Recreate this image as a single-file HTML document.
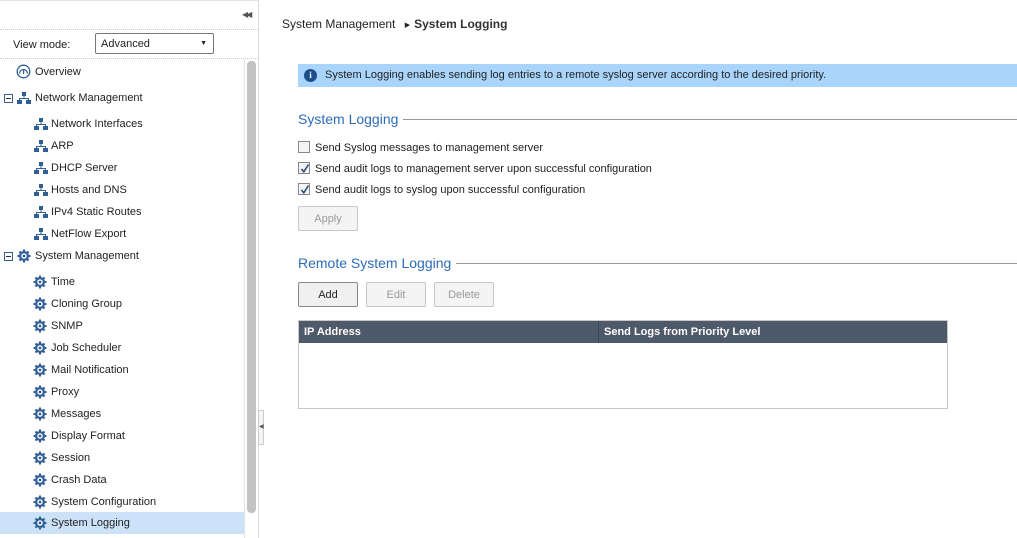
<!DOCTYPE html>
<html><head><style>
*{box-sizing:border-box;margin:0;padding:0}
body{width:1017px;height:538px;overflow:hidden;background:#fff;font-family:"Liberation Sans",Tahoma,sans-serif;font-size:11px;color:#222;position:relative}
.abs{position:absolute}
.side{left:0;top:0;width:259px;height:538px;border-right:1px solid #ddd;border-top:1px solid #e4e4e4;overflow:hidden}
.row{position:absolute;height:22px;line-height:23px;white-space:nowrap}
.row svg{position:absolute;top:4px}
.lbl{position:absolute}
.sel{background:#cce2f9}
.chk{position:absolute;width:12px;height:12px;border:1px solid #888;background:#f4f4f4}
.chk svg{position:absolute;left:0;top:0}
.btn{position:absolute;height:25px;border:1px solid #c8c8c8;background:#f4f4f4;color:#999;text-align:center;line-height:25px;font-size:11px;border-radius:2px}
h2{position:absolute;font-weight:normal;color:#2c6cb8;font-size:14px}
</style></head><body>
<svg width="0" height="0" style="position:absolute"><defs>
<symbol id="g" viewBox="0 0 14 14"><g fill="#2f5f96"><circle cx="7" cy="7" r="5"/><rect x="6" y="0.5" width="2" height="13"/><rect x="0.5" y="6" width="13" height="2"/><rect x="6" y="0.5" width="2" height="13" transform="rotate(45 7 7)"/><rect x="6" y="0.5" width="2" height="13" transform="rotate(-45 7 7)"/></g><circle cx="7" cy="7" r="2.8" fill="#fff"/><circle cx="7" cy="7" r="1.4" fill="#2f5f96"/></symbol>
<symbol id="n" viewBox="0 0 14 14"><g fill="#2f5f96"><rect x="5" y="1" width="4" height="4"/><rect x="6.5" y="5" width="1" height="2"/><rect x="2" y="7" width="10" height="1"/><rect x="2" y="7" width="1" height="2"/><rect x="11" y="7" width="1" height="2"/><rect x="0" y="9" width="5" height="4"/><rect x="9" y="9" width="5" height="4"/></g></symbol>
<symbol id="c" viewBox="0 0 12 12"><path d="M2.5 6l2.3 2.8L9.5 1.5" fill="none" stroke="#2a4d7a" stroke-width="1.6"/></symbol>
</defs></svg>
<div class="abs side">
 <div class="abs" style="left:0;top:28px;width:258px;border-top:1px dotted #ccc"></div>
 <div class="abs" style="left:242px;top:9px;font-size:8px;color:#555;letter-spacing:-2px">◀◀</div>
 <div class="abs" style="left:13px;top:38px;font-size:11px">View mode:</div>
 <div class="abs" style="left:95px;top:32px;width:119px;height:21px;border:1px solid #777;border-radius:2px;padding:4px 5px">Advanced<span style="position:absolute;right:6px;top:6px;font-size:7px">▼</span></div>
 <div class="abs" style="left:0;top:57px;width:258px;border-top:1px dotted #ccc"></div>
 <div class="abs" style="left:247px;top:60px;width:9px;height:452px;background:#c3c3c3;border-radius:4px"></div>
 <div class="abs" style="left:244px;top:58px;height:480px;border-left:1px solid #e2e2e2"></div>

 <div class="row" style="top:60px;left:0;width:244px"><svg style="left:16px;top:3px" width="15" height="15" viewBox="0 0 15 15"><circle cx="7.5" cy="7.5" r="6.3" fill="none" stroke="#2f5f96" stroke-width="1.3"/><path d="M3.5 9.5a4 4 0 1 1 8 0" fill="none" stroke="#2f5f96" stroke-width="1.2"/><rect x="7" y="5" width="1.2" height="5" fill="#2f5f96"/></svg><span class="lbl" style="left:35px">Overview</span></div>
 <div class="row" style="top:86px;left:0"><span style="position:absolute;left:4px;top:7px;width:9px;height:9px;border:1px solid #3a5f8a;background:#fff"><span style="position:absolute;left:1px;top:3px;width:5px;height:1px;background:#333"></span></span><svg style="left:17px" width="14" height="14"><use href="#n"/></svg><span class="lbl" style="left:35px">Network Management</span></div>
 <div class="row" style="top:112px"><svg style="left:34px" width="14" height="14"><use href="#n"/></svg><span class="lbl" style="left:51px">Network Interfaces</span></div>
 <div class="row" style="top:134px"><svg style="left:34px" width="14" height="14"><use href="#n"/></svg><span class="lbl" style="left:51px">ARP</span></div>
 <div class="row" style="top:156px"><svg style="left:34px" width="14" height="14"><use href="#n"/></svg><span class="lbl" style="left:51px">DHCP Server</span></div>
 <div class="row" style="top:178px"><svg style="left:34px" width="14" height="14"><use href="#n"/></svg><span class="lbl" style="left:51px">Hosts and DNS</span></div>
 <div class="row" style="top:200px"><svg style="left:34px" width="14" height="14"><use href="#n"/></svg><span class="lbl" style="left:51px">IPv4 Static Routes</span></div>
 <div class="row" style="top:222px"><svg style="left:34px" width="14" height="14"><use href="#n"/></svg><span class="lbl" style="left:51px">NetFlow Export</span></div>
 <div class="row" style="top:244px;left:0"><span style="position:absolute;left:4px;top:7px;width:9px;height:9px;border:1px solid #3a5f8a;background:#fff"><span style="position:absolute;left:1px;top:3px;width:5px;height:1px;background:#333"></span></span><svg style="left:17px" width="14" height="14"><use href="#g"/></svg><span class="lbl" style="left:35px">System Management</span></div>
 <div class="row" style="top:270px"><svg style="left:33px" width="14" height="14"><use href="#g"/></svg><span class="lbl" style="left:51px">Time</span></div>
 <div class="row" style="top:292px"><svg style="left:33px" width="14" height="14"><use href="#g"/></svg><span class="lbl" style="left:51px">Cloning Group</span></div>
 <div class="row" style="top:314px"><svg style="left:33px" width="14" height="14"><use href="#g"/></svg><span class="lbl" style="left:51px">SNMP</span></div>
 <div class="row" style="top:336px"><svg style="left:33px" width="14" height="14"><use href="#g"/></svg><span class="lbl" style="left:51px">Job Scheduler</span></div>
 <div class="row" style="top:358px"><svg style="left:33px" width="14" height="14"><use href="#g"/></svg><span class="lbl" style="left:51px">Mail Notification</span></div>
 <div class="row" style="top:380px"><svg style="left:33px" width="14" height="14"><use href="#g"/></svg><span class="lbl" style="left:51px">Proxy</span></div>
 <div class="row" style="top:402px"><svg style="left:33px" width="14" height="14"><use href="#g"/></svg><span class="lbl" style="left:51px">Messages</span></div>
 <div class="row" style="top:424px"><svg style="left:33px" width="14" height="14"><use href="#g"/></svg><span class="lbl" style="left:51px">Display Format</span></div>
 <div class="row" style="top:446px"><svg style="left:33px" width="14" height="14"><use href="#g"/></svg><span class="lbl" style="left:51px">Session</span></div>
 <div class="row" style="top:468px"><svg style="left:33px" width="14" height="14"><use href="#g"/></svg><span class="lbl" style="left:51px">Crash Data</span></div>
 <div class="row" style="top:490px"><svg style="left:33px" width="14" height="14"><use href="#g"/></svg><span class="lbl" style="left:51px">System Configuration</span></div>
 <div class="row sel" style="top:511px;left:0;width:244px"><svg style="left:33px" width="14" height="14"><use href="#g"/></svg><span class="lbl" style="left:51px">System Logging</span></div>
 <div class="row" style="top:533px"><svg style="left:33px" width="14" height="14"><use href="#g"/></svg></div>
</div>
<div class="abs" style="left:258px;top:410px;width:6px;height:35px;border:1px solid #ccc;background:#f4f4f4;font-size:6px;line-height:33px;color:#555">◀</div>

<div class="abs" style="left:282px;top:17px;font-size:12px">System Management <span style="font-size:7px;margin:0 4px 0 6px;vertical-align:1px">▶</span><b style="color:#333">System Logging</b></div>
<div class="abs" style="left:298px;top:64px;width:719px;height:23px;background:#a9d4fb;line-height:23px;padding-left:27px">System Logging enables sending log entries to a remote syslog server according to the desired priority.<span style="position:absolute;left:6px;top:5px;width:13px;height:13px;border-radius:50%;background:#1d4f8a;color:#fff;font-weight:bold;font-size:9px;line-height:13px;text-align:center;font-family:'Liberation Serif',serif">i</span></div>

<h2 style="left:298px;top:111px">System Logging</h2>
<div class="abs" style="left:403px;top:119px;width:614px;border-top:1px solid #999"></div>
<div class="chk" style="left:298px;top:141px"></div><div class="abs" style="left:315px;top:142px">Send Syslog messages to management server</div>
<div class="chk" style="left:298px;top:162px"><svg width="12" height="12"><use href="#c"/></svg></div><div class="abs" style="left:315px;top:163px">Send audit logs to management server upon successful configuration</div>
<div class="chk" style="left:298px;top:183px"><svg width="12" height="12"><use href="#c"/></svg></div><div class="abs" style="left:315px;top:184px">Send audit logs to syslog upon successful configuration</div>
<div class="btn" style="left:298px;top:206px;width:60px">Apply</div>

<h2 style="left:298px;top:255px">Remote System Logging</h2>
<div class="abs" style="left:456px;top:263px;width:561px;border-top:1px solid #999"></div>
<div class="btn" style="left:298px;top:282px;width:60px;border-color:#888;background:#f0f0f0;color:#222">Add</div>
<div class="btn" style="left:366px;top:282px;width:60px">Edit</div>
<div class="btn" style="left:434px;top:282px;width:60px">Delete</div>
<div class="abs" style="left:298px;top:320px;width:650px;height:89px;border:1px solid #c8c8c8">
 <div style="height:22px;background:#4e5a69;color:#fff;font-weight:bold;line-height:22px;position:relative"><span style="position:absolute;left:5px">IP Address</span><span style="position:absolute;left:299px;top:0;height:22px;border-left:1px solid #3a4552"></span><span style="position:absolute;left:305px">Send Logs from Priority Level</span></div>
</div>
</body></html>
